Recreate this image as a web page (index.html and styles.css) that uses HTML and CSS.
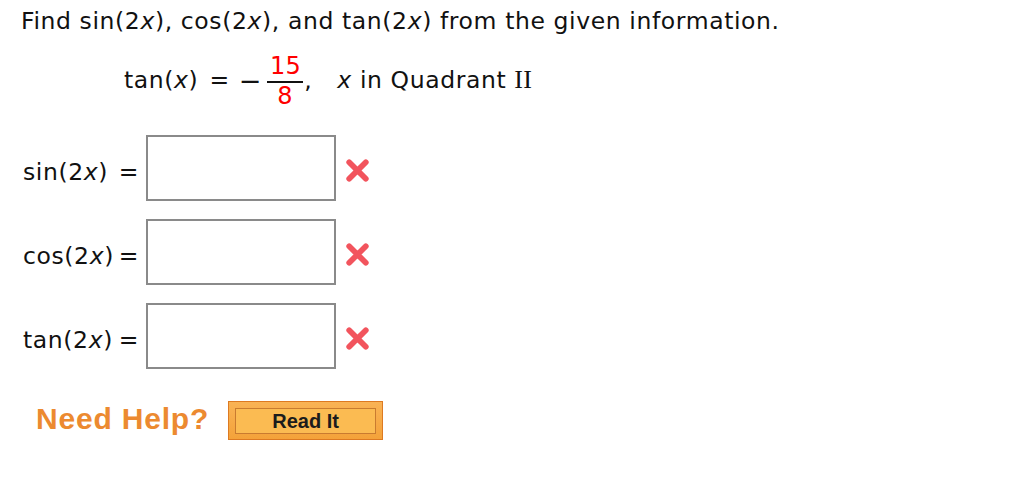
FILE: index.html
```html
<!DOCTYPE html>
<html>
<head>
<meta charset="utf-8">
<link rel="stylesheet" href="styles.css">
</head>
<body>
<div class="page">
  <p class="prompt">Find sin(2<i>x</i>), cos(2<i>x</i>), and tan(2<i>x</i>) from the given information.</p>
  <div class="given">
    <span class="fn">tan(<i>x</i>)</span>
    <span class="eq">=</span>
    <span class="minus">−</span>
    <span class="frac"><span class="num">15</span><span class="den">8</span></span><span class="comma">,</span>
    <span class="quad"><i>x</i> in Quadrant <span class="roman">II</span></span>
  </div>
  <div class="rows">
    <div class="row">
      <span class="label"><span>sin(2<i>x</i>)</span><span>=</span></span>
      <span class="box"></span>
      <svg class="mark" viewBox="0 0 26 26"><path d="M5 5 L21 21 M21 5 L5 21"/></svg>
    </div>
    <div class="row">
      <span class="label"><span>cos(2<i>x</i>)</span><span>=</span></span>
      <span class="box"></span>
      <svg class="mark" viewBox="0 0 26 26"><path d="M5 5 L21 21 M21 5 L5 21"/></svg>
    </div>
    <div class="row">
      <span class="label"><span>tan(2<i>x</i>)</span><span>=</span></span>
      <span class="box"></span>
      <svg class="mark" viewBox="0 0 26 26"><path d="M5 5 L21 21 M21 5 L5 21"/></svg>
    </div>
  </div>
  <div class="help">
    <span class="need">Need Help?</span>
    <span class="btn"><span class="btn-inner">Read It</span></span>
  </div>
</div>
</body>
</html>
```
FILE: styles.css
```css
html, body {
  margin: 0;
  padding: 0;
  background: #fff;
}
.page {
  font-family: "DejaVu Sans", Verdana, sans-serif;
  color: #111;
  padding: 6px 0 0 21px;
  letter-spacing: 0.6px;
}
i {
  font-style: italic;
}
.prompt {
  margin: 0;
  font-size: 23.5px;
  line-height: 30px;
}
.given {
  display: flex;
  align-items: center;
  margin: 14px 0 0 103px;
  font-size: 23.5px;
  height: 60px;
}
.eq {
  margin-left: 11px;
}
.minus {
  margin-left: 9px;
  font-size: 27px;
  line-height: 1;
}
.frac {
  display: inline-flex;
  flex-direction: column;
  align-items: center;
  color: #f00;
  font-size: 24px;
  line-height: 24px;
  margin: 2px 0 0 5px;
  letter-spacing: 0.4px;
}
.num {
  padding: 0 2px 3px 3px;
  border-bottom: 2px solid #111;
}
.den {
  padding-top: 1px;
}
.comma {
  margin-left: 1px;
}
.quad {
  margin-left: 25px;
}
.roman {
  font-family: "Liberation Serif", "Times New Roman", serif;
  font-size: 26px;
  letter-spacing: 0.3px;
}
.rows {
  display: flex;
  flex-direction: column;
  gap: 18px;
  margin-top: 25px;
  padding-left: 2px;
}
.row {
  display: flex;
  align-items: center;
  height: 66px;
}
.label {
  display: flex;
  justify-content: space-between;
  width: 116px;
  margin: 7px 7px 0 0;
  font-size: 23.5px;
}
.box {
  width: 186px;
  height: 62px;
  border: 2px solid #8a8a8a;
  background: #fff;
}
.mark {
  width: 27px;
  height: 27px;
  margin: 5px 0 0 8px;
}
.mark path {
  stroke: #f2545d;
  stroke-width: 5.5;
  stroke-linecap: round;
  fill: none;
}
.help {
  display: flex;
  align-items: center;
  margin-top: 32px;
  padding-left: 15px;
}
.need {
  font-family: "Liberation Sans", Arial, sans-serif;
  font-weight: bold;
  font-size: 30px;
  letter-spacing: 0.8px;
  color: #ec8a30;
  margin: 0 19px 3px 0;
}
.btn {
  display: flex;
  width: 155px;
  height: 39px;
  border: 1px solid #dd7a22;
  background: linear-gradient(#f9b355, #f4a23a);
  padding: 6px 6px 5px 6px;
  box-sizing: border-box;
}
.btn-inner {
  flex: 1;
  display: flex;
  align-items: center;
  justify-content: center;
  border: 1px solid #c97b30;
  background: #fbbb52;
  font-family: "Liberation Sans", Arial, sans-serif;
  font-weight: bold;
  font-size: 20px;
  letter-spacing: 0;
  color: #1c1c1c;
}
```
